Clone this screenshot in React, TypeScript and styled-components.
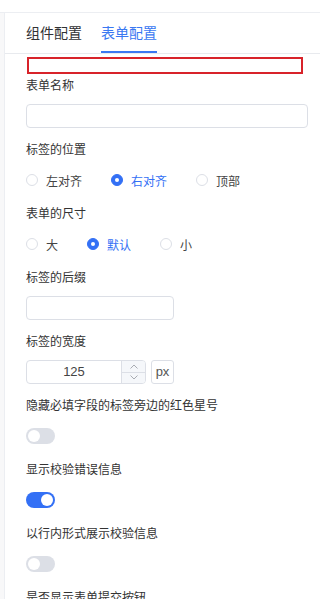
import React from "react";
import styled, { createGlobalStyle } from "styled-components";

const Global = createGlobalStyle`
  html, body { margin: 0; padding: 0; background: #fff; }
  body {
    font-family: "Liberation Sans", "Noto Sans CJK SC", sans-serif;
    -webkit-font-smoothing: antialiased;
  }
  * { box-sizing: border-box; }
`;

const BLUE = "#3370f5";

const Page = styled.div`
  padding-top: 12px;
  height: 599px;
  overflow: hidden;
`;

const Frame = styled.div`
  display: flex;
  border-top: 1px solid #eceef2;
  height: 100%;
`;

const Strip = styled.div`
  width: 5px;
  flex: none;
  background: #f8f8f9;
  border-right: 1px solid #eceef2;
`;

const Main = styled.div`
  flex: 1;
  min-width: 0;
`;

const TabBar = styled.div`
  display: flex;
  gap: 19px;
  height: 41px;
  padding-left: 21px;
  border-bottom: 1px solid #e8eaee;
`;

const Tab = styled.div<{ $active?: boolean }>`
  position: relative;
  height: 40px;
  line-height: 40px;
  font-size: 14px;
  color: ${(p) => (p.$active ? "#3a78f2" : "#303133")};
  &::after {
    content: "";
    display: ${(p) => (p.$active ? "block" : "none")};
    position: absolute;
    left: 0;
    right: 0;
    bottom: 0;
    height: 2px;
    background: #3a78f2;
  }
`;

const Body = styled.div`
  padding: 0 12px 0 21px;
`;

const Marker = styled.div`
  height: 17px;
  margin: 3px 5px 2px 1px;
  border: 2px solid #d8232a;
`;

const Item = styled.div`
  margin-bottom: 12px;
`;

const Label = styled.div`
  font-size: 12px;
  line-height: 20px;
  color: #333;
  margin-bottom: 8px;
  white-space: nowrap;
`;

const TextBox = styled.div<{ $w?: number }>`
  height: 24px;
  width: ${(p) => (p.$w ? `${p.$w}px` : "100%")};
  border: 1px solid #dcdfe6;
  border-radius: 4px;
  background: #fff;
`;

const RadioRow = styled.div`
  display: flex;
  align-items: center;
  height: 24px;
  gap: 29px;
`;

const RadioOpt = styled.label`
  display: flex;
  align-items: center;
  gap: 8px;
  font-size: 12px;
  color: #444;
`;

const RadioDot = styled.span<{ $on?: boolean }>`
  width: 12px;
  height: 12px;
  border-radius: 50%;
  border: 1px solid ${(p) => (p.$on ? BLUE : "#dcdfe6")};
  background: ${(p) => (p.$on ? BLUE : "#fff")};
  display: flex;
  align-items: center;
  justify-content: center;
  &::after {
    content: "";
    width: 4px;
    height: 4px;
    border-radius: 50%;
    background: #fff;
    display: ${(p) => (p.$on ? "block" : "none")};
  }
`;

const RadioText = styled.span<{ $on?: boolean }>`
  color: ${(p) => (p.$on ? BLUE : "#444")};
`;

const NumRow = styled.div`
  display: flex;
  align-items: center;
  gap: 5px;
  height: 24px;
`;

const NumBox = styled.div`
  display: flex;
  width: 120px;
  height: 24px;
  border: 1px solid #dcdfe6;
  border-radius: 4px;
  overflow: hidden;
`;

const NumValue = styled.div`
  flex: 1;
  text-align: center;
  line-height: 22px;
  font-size: 13px;
  color: #444;
`;

const Steppers = styled.div`
  width: 24px;
  display: flex;
  flex-direction: column;
  border-left: 1px solid #dcdfe6;
  background: #f5f7fa;
`;

const Step = styled.div<{ $top?: boolean }>`
  flex: 1;
  display: flex;
  align-items: center;
  justify-content: center;
  border-bottom: ${(p) => (p.$top ? "1px solid #dcdfe6" : "none")};
`;

const Unit = styled.div`
  width: 23px;
  height: 24px;
  border: 1px solid #dcdfe6;
  border-radius: 3px;
  font-size: 13px;
  line-height: 22px;
  text-align: center;
  color: #555;
`;

const SwitchRow = styled.div`
  height: 24px;
  display: flex;
  align-items: center;
`;

const Switch = styled.span<{ $on?: boolean }>`
  position: relative;
  width: 29px;
  height: 16px;
  border-radius: 8px;
  background: ${(p) => (p.$on ? BLUE : "#dcdfe6")};
  &::after {
    content: "";
    position: absolute;
    top: 2px;
    left: ${(p) => (p.$on ? "15px" : "2px")};
    width: 12px;
    height: 12px;
    border-radius: 50%;
    background: #fff;
  }
`;

const Chevron = ({ up }: { up?: boolean }) => (
  <svg width="8" height="5" viewBox="0 0 8 5">
    <polyline
      points={up ? "0.5,4.5 4,1 7.5,4.5" : "0.5,0.5 4,4 7.5,0.5"}
      fill="none"
      stroke="#a8abb2"
      strokeWidth="1"
    />
  </svg>
);

type Opt = { text: string; on?: boolean };

const Radios = ({ opts }: { opts: Opt[] }) => (
  <RadioRow>
    {opts.map((o) => (
      <RadioOpt key={o.text}>
        <RadioDot $on={o.on} />
        <RadioText $on={o.on}>{o.text}</RadioText>
      </RadioOpt>
    ))}
  </RadioRow>
);

export default function App() {
  return (
    <>
      <Global />
      <Page>
        <Frame>
          <Strip />
          <Main>
            <TabBar>
              <Tab>组件配置</Tab>
              <Tab $active>表单配置</Tab>
            </TabBar>
            <Body>
              <Marker />
              <Item>
                <Label>表单名称</Label>
                <TextBox />
              </Item>
              <Item>
                <Label>标签的位置</Label>
                <Radios
                  opts={[
                    { text: "左对齐" },
                    { text: "右对齐", on: true },
                    { text: "顶部" },
                  ]}
                />
              </Item>
              <Item>
                <Label>表单的尺寸</Label>
                <Radios
                  opts={[{ text: "大" }, { text: "默认", on: true }, { text: "小" }]}
                />
              </Item>
              <Item>
                <Label>标签的后缀</Label>
                <TextBox $w={148} />
              </Item>
              <Item>
                <Label>标签的宽度</Label>
                <NumRow>
                  <NumBox>
                    <NumValue>125</NumValue>
                    <Steppers>
                      <Step $top>
                        <Chevron up />
                      </Step>
                      <Step>
                        <Chevron />
                      </Step>
                    </Steppers>
                  </NumBox>
                  <Unit>px</Unit>
                </NumRow>
              </Item>
              <Item>
                <Label>隐藏必填字段的标签旁边的红色星号</Label>
                <SwitchRow>
                  <Switch />
                </SwitchRow>
              </Item>
              <Item>
                <Label>显示校验错误信息</Label>
                <SwitchRow>
                  <Switch $on />
                </SwitchRow>
              </Item>
              <Item>
                <Label>以行内形式展示校验信息</Label>
                <SwitchRow>
                  <Switch />
                </SwitchRow>
              </Item>
              <Item>
                <Label>是否显示表单提交按钮</Label>
                <SwitchRow>
                  <Switch />
                </SwitchRow>
              </Item>
            </Body>
          </Main>
        </Frame>
      </Page>
    </>
  );
}
